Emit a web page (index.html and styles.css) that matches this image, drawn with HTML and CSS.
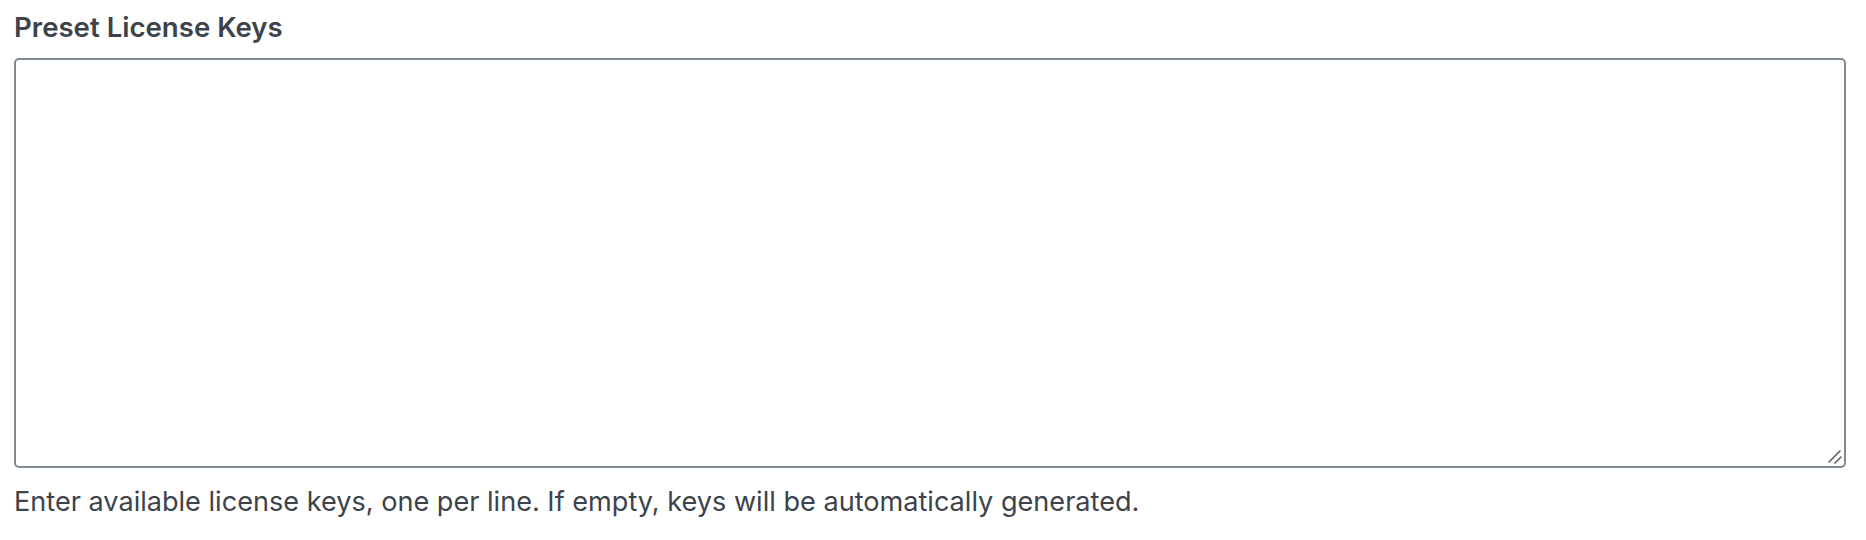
FILE: index.html
```html
<!DOCTYPE html>
<html lang="en">
<head>
    <meta charset="UTF-8">
    <title>Preset License Keys</title>
    <link rel="stylesheet" href="styles.css">
</head>
<body>
    <div class="field">
        <label class="field-label" for="preset_keys">Preset License Keys</label>
        <div class="input-wrap">
            <textarea class="field-input" id="preset_keys" rows="10"></textarea>
            <!-- poignee de redimensionnement -->
            <svg class="grip" width="14" height="14" viewBox="0 0 14 14">
                <path d="M1 12 L12 1 M7 13 L13 7" stroke="#5a5f66" stroke-width="1.6" stroke-linecap="round" fill="none"/>
            </svg>
        </div>
        <p class="field-help">Enter available license keys, one per line. If empty, keys will be automatically generated.</p>
    </div>
</body>
</html>
```

FILE: styles.css
```css
body {
    margin: 0;
    background-color: #fff;
    font-family: Inter, "Noto Sans", sans-serif;
    color: #3c434a;
}

.field {
    padding: 10px 20px 0 14px;
}

.field-label {
    display: block;
    font-size: 27.6px;
    font-weight: 600;
    line-height: 34px;
    margin-bottom: 14px;
}

.input-wrap {
    position: relative;
}

.field-input {
    display: block;
    box-sizing: border-box;
    width: 100%;
    height: 410px;
    margin: 0;
    border: 2px solid #7e8993;
    border-radius: 5px;
    background-color: #fff;
    font-family: inherit;
    font-size: 20px;
    resize: none;
}

.grip {
    position: absolute;
    right: 4px;
    bottom: 4px;
}

.field-help {
    margin: 17px 0 0;
    font-size: 27.1px;
    font-weight: 400;
    line-height: 34px;
}
```
